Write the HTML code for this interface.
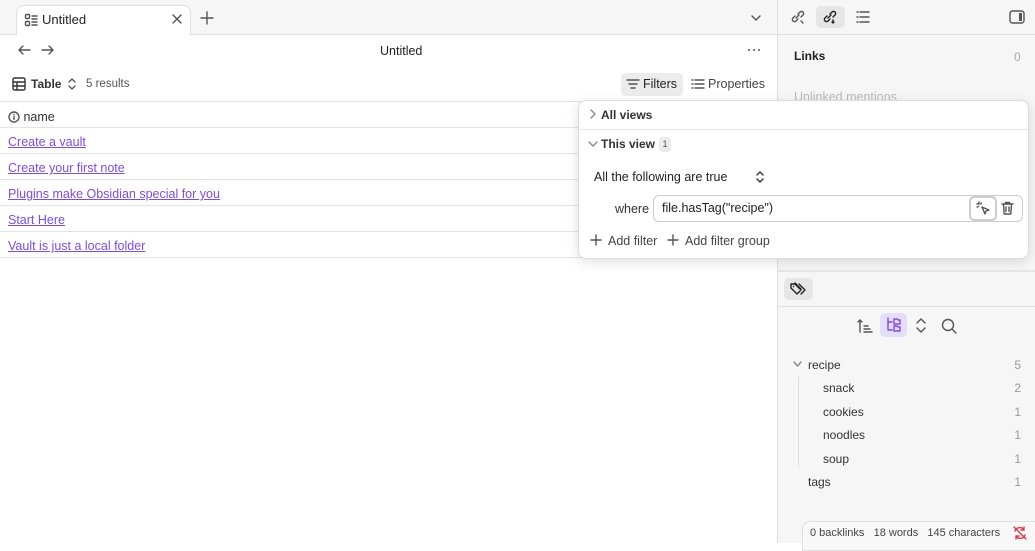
<!DOCTYPE html>
<html><head><style>
*{box-sizing:border-box;margin:0;padding:0}
body{width:1035px;height:543px;overflow:hidden;font-family:"Liberation Sans",sans-serif;font-size:13px;color:#222;background:#fff;position:relative}
.abs{position:absolute;white-space:nowrap}
svg{fill:none;stroke:#555;stroke-width:1.4;stroke-linecap:round;stroke-linejoin:round}
a{color:#7c4dde;text-decoration:underline}
.row{position:absolute;left:0;width:778px;height:26px;border-bottom:1px solid #e3e3e3;padding:7px 8px;font-size:12.5px}
.tag{position:absolute;left:0;width:257px;font-size:12px;color:#333}
.tag span{position:absolute;right:14px;color:#999}
</style></head><body>
<!-- tab bar -->
<div class="abs" style="left:0;top:0;width:778px;height:35px;background:#f6f6f6;border-bottom:1px solid #e0e0e0"></div>
<div class="abs" style="left:16px;top:5px;width:175px;height:30px;background:#fff;border:1px solid #e0e0e0;border-bottom:none;border-radius:8px 8px 0 0"></div>
<svg class="abs" style="left:24px;top:13px" width="14" height="14" viewBox="0 0 14 14"><rect x="1.5" y="1.5" width="4" height="4" rx="1"/><rect x="1.5" y="8.5" width="4" height="4" rx="1"/><path d="M8 3h5M8 6h5M8 9h5M8 12h5"/></svg>
<div class="abs" style="left:42px;top:12px;font-size:13px">Untitled</div>
<svg class="abs" style="left:171px;top:13px" width="12" height="12" viewBox="0 0 12 12"><path d="M2 2l8 8M10 2l-8 8"/></svg>
<svg class="abs" style="left:200px;top:11px" width="14" height="14" viewBox="0 0 14 14"><path d="M7 1v12M1 7h12"/></svg>
<svg class="abs" style="left:750px;top:13px" width="12" height="10" viewBox="0 0 12 10"><path d="M2 3l4 4 4-4"/></svg>
<!-- nav -->
<svg class="abs" style="left:17px;top:44px" width="14" height="12" viewBox="0 0 14 12"><path d="M13 6H2M6 2L2 6l4 4"/></svg>
<svg class="abs" style="left:41px;top:44px" width="14" height="12" viewBox="0 0 14 12"><path d="M1 6h11M8 2l4 4-4 4"/></svg>
<div class="abs" style="left:380px;top:44px;font-size:12.5px">Untitled</div>
<svg class="abs" style="left:747px;top:48px" width="14" height="4" viewBox="0 0 14 4"><circle cx="2" cy="2" r="1" fill="#555" stroke="none"/><circle cx="7" cy="2" r="1" fill="#555" stroke="none"/><circle cx="12" cy="2" r="1" fill="#555" stroke="none"/></svg>
<!-- toolbar -->
<svg class="abs" style="left:12px;top:77px" width="14" height="14" viewBox="0 0 14 14"><rect x="1" y="1" width="12" height="12" rx="1.5" stroke="#333"/><path d="M1 5h12M1 9h12M5 5v8" stroke="#333"/></svg>
<div class="abs" style="left:31px;top:77px;font-weight:bold;color:#333;font-size:12px">Table</div>
<svg class="abs" style="left:67px;top:78px" width="10" height="12" viewBox="0 0 10 12"><path d="M2 4l3-3 3 3M2 8l3 3 3-3"/></svg>
<div class="abs" style="left:86px;top:78px;font-size:11.5px;color:#555">5 results</div>
<div class="abs" style="left:621px;top:73px;width:62px;height:23px;background:#ececec;border-radius:5px"></div>
<svg class="abs" style="left:626px;top:78px" width="14" height="12" viewBox="0 0 14 12"><path d="M1 2h12M3 6h8M5 10h4"/></svg>
<div class="abs" style="left:643px;top:77px;font-size:12.5px">Filters</div>
<svg class="abs" style="left:691px;top:78px" width="14" height="12" viewBox="0 0 14 12"><path d="M1 2h1M1 6h1M1 10h1M4 2h9M4 6h9M4 10h9"/></svg>
<div class="abs" style="left:708px;top:77px;color:#444;font-size:12.5px">Properties</div>
<!-- table -->
<div class="abs" style="left:0;top:101px;width:778px;border-top:1px solid #e3e3e3"></div>
<div class="row" style="top:102px;color:#333"><svg style="position:relative;top:2px" width="12" height="12" viewBox="0 0 12 12"><circle cx="6" cy="6" r="5"/><path d="M6 5.5v3M6 3.5v.1"/></svg> name</div>
<div class="row" style="top:128px"><a>Create a vault</a></div>
<div class="row" style="top:154px"><a>Create your first note</a></div>
<div class="row" style="top:180px"><a>Plugins make Obsidian special for you</a></div>
<div class="row" style="top:206px"><a>Start Here</a></div>
<div class="row" style="top:232px"><a>Vault is just a local folder</a></div>
<!-- right sidebar -->
<div class="abs" style="left:777px;top:0;width:258px;height:543px;background:#f6f6f6;border-left:1px solid #e0e0e0"></div>
<div class="abs" style="left:778px;top:34px;width:257px;border-top:1px solid #e0e0e0"></div>
<svg class="abs" style="left:790px;top:9px" width="16" height="16" viewBox="0 0 16 16"><path d="M6 9l3-3M5 7L3 9a2 2 0 003 3l2-2M8 5l2-2a2 2 0 013 3l-2 2M11 12l2 2"/></svg>
<div class="abs" style="left:816px;top:6px;width:29px;height:22px;background:#e6e6e6;border-radius:5px"></div>
<svg class="abs" style="left:822px;top:9px;stroke:#222" width="16" height="16" viewBox="0 0 16 16"><path d="M6 9l3-3M5 7L3 9a2 2 0 003 3l2-2M8 5l2-2a2 2 0 013 3l-2 2M11 11v3M10 13l1 1 1-1"/></svg>
<svg class="abs" style="left:855px;top:10px" width="16" height="14" viewBox="0 0 16 14"><path d="M2 2h1M2 7h1M2 12h1M5 2h9M5 7h9M5 12h9"/></svg>
<svg class="abs" style="left:1009px;top:10px" width="16" height="14" viewBox="0 0 16 14"><rect x="1" y="1" width="14" height="12" rx="2.5"/><rect x="10" y="3" width="3" height="8" fill="#555" stroke="none"/></svg>
<div class="abs" style="left:794px;top:49px;font-weight:bold;font-size:12px">Links</div>
<div class="abs" style="left:1014px;top:50px;font-size:12px;color:#aaa">0</div>
<div class="abs" style="left:794px;top:90px;font-size:12.5px;color:#bbb">Unlinked mentions</div>
<div class="abs" style="left:778px;top:270px;width:257px;border-top:2px solid #e6e6e6"></div>
<div class="abs" style="left:778px;top:306px;width:257px;border-top:1px solid #e0e0e0"></div>
<div class="abs" style="left:784px;top:278px;width:29px;height:22px;background:#e6e6e6;border-radius:5px"></div>
<svg class="abs" style="left:790px;top:282px;stroke:#222" width="16" height="14" viewBox="0 0 16 14"><path d="M1 2v4l6 6 4-4-6-6zM5 1l6 6M3.5 4.5v.1M9 2l6 6-4 4"/></svg>
<svg class="abs" style="left:857px;top:318px" width="16" height="15" viewBox="0 0 16 15"><path d="M3 14V2M1 4l2-2 2 2M7 8h4M7 11h6M7 14h8"/></svg>
<div class="abs" style="left:880px;top:313px;width:27px;height:24px;background:#e5defa;border-radius:5px"></div>
<svg class="abs" style="left:886px;top:317px;stroke:#7c4dde" width="16" height="16" viewBox="0 0 16 16"><path d="M2 1v12h4M2 5h4M8 2h3l1 1h2v4H8zM8 9h3l1 1h2v4H8z"/></svg>
<svg class="abs" style="left:915px;top:318px" width="12" height="15" viewBox="0 0 12 15"><path d="M2 5l4-4 4 4M2 10l4 4 4-4"/></svg>
<svg class="abs" style="left:941px;top:318px" width="16" height="16" viewBox="0 0 16 16"><circle cx="7" cy="7" r="5.5"/><path d="M11 11l4 4"/></svg>
<svg class="abs" style="left:793px;top:361px" width="9" height="7" viewBox="0 0 9 7"><path d="M1 1l3.5 4L8 1" stroke="#888"/></svg>
<div class="abs" style="left:798px;top:377px;height:90px;border-left:1px solid #ddd"></div>
<div class="tag" style="left:778px;top:358px"><b style="font-weight:normal;position:absolute;left:30px">recipe</b><span>5</span></div>
<div class="tag" style="left:778px;top:381px"><b style="font-weight:normal;position:absolute;left:45px">snack</b><span>2</span></div>
<div class="tag" style="left:778px;top:405px"><b style="font-weight:normal;position:absolute;left:45px">cookies</b><span>1</span></div>
<div class="tag" style="left:778px;top:428px"><b style="font-weight:normal;position:absolute;left:45px">noodles</b><span>1</span></div>
<div class="tag" style="left:778px;top:452px"><b style="font-weight:normal;position:absolute;left:45px">soup</b><span>1</span></div>
<div class="tag" style="left:778px;top:475px"><b style="font-weight:normal;position:absolute;left:30px">tags</b><span>1</span></div>
<div class="abs" style="left:802px;top:521px;width:240px;height:30px;background:#f8f8f8;border:1px solid #e0e0e0;border-radius:8px 0 0 0"></div>
<div class="abs" style="left:810px;top:527px;font-size:11px;color:#444">0 backlinks &nbsp;&nbsp;18 words &nbsp;&nbsp;145 characters</div>
<svg class="abs" style="left:1013px;top:526px;stroke:#e0394a" width="14" height="14" viewBox="0 0 14 14"><path d="M2 5a5 5 0 019-1M12 9a5 5 0 01-9 1M11 1v3H8M3 13v-3h3M1 1l12 12"/></svg>
<!-- popup -->
<div class="abs" style="left:578px;top:100px;width:451px;height:159px;background:#fff;border:1px solid #ddd;border-radius:8px;box-shadow:0 3px 12px rgba(0,0,0,.12)"></div>
<div class="abs" style="left:579px;top:129px;width:449px;border-top:1px solid #e6e6e6"></div>
<svg class="abs" style="left:589px;top:109px" width="8" height="10" viewBox="0 0 8 10"><path d="M2 1l4 4-4 4" stroke="#888"/></svg>
<div class="abs" style="left:601px;top:108px;font-weight:bold;font-size:12px;color:#333">All views</div>
<svg class="abs" style="left:588px;top:140px" width="10" height="8" viewBox="0 0 10 8"><path d="M1 2l4 4 4-4" stroke="#888"/></svg>
<div class="abs" style="left:601px;top:137px;font-weight:bold;font-size:12px;color:#333">This view</div>
<div class="abs" style="left:659px;top:137px;width:12px;height:15px;background:#ececec;border-radius:3px;font-size:9px;text-align:center;line-height:15px;color:#555">1</div>
<div class="abs" style="left:594px;top:170px;font-size:12.5px">All the following are true</div>
<svg class="abs" style="left:755px;top:171px" width="10" height="12" viewBox="0 0 10 12"><path d="M2 4l3-3 3 3M2 8l3 3 3-3" stroke="#333"/></svg>
<div class="abs" style="left:615px;top:202px;font-size:12.5px;color:#333">where</div>
<div class="abs" style="left:653px;top:195px;width:370px;height:27px;border:1.5px solid #ccc;border-radius:6px"></div>
<div class="abs" style="left:662px;top:201px;font-size:12.5px">file.hasTag("recipe")</div>
<div class="abs" style="left:969px;top:196px;width:28px;height:25px;border:2px solid #ccc;border-radius:5px;background:#fff"></div>
<svg class="abs" style="left:976px;top:201px" width="14" height="14" viewBox="0 0 14 14"><path d="M6 6l7 3-3 1-1 3zM3 1v2M1 3h2M5.5 2l-1 1M1 6l1.5-.5"/></svg>
<svg class="abs" style="left:1001px;top:201px" width="13" height="14" viewBox="0 0 13 14"><path d="M1 3h11M4.5 3V1.5h4V3M2.5 3l.7 10h6.6l.7-10M5 6v4.5M8 6v4.5"/></svg>
<svg class="abs" style="left:590px;top:234px" width="12" height="12" viewBox="0 0 12 12"><path d="M6 1v10M1 6h10"/></svg>
<div class="abs" style="left:608px;top:234px;font-size:12.5px;color:#444">Add filter</div>
<svg class="abs" style="left:667px;top:234px" width="12" height="12" viewBox="0 0 12 12"><path d="M6 1v10M1 6h10"/></svg>
<div class="abs" style="left:685px;top:234px;font-size:12.5px;color:#444">Add filter group</div>
</body></html>
